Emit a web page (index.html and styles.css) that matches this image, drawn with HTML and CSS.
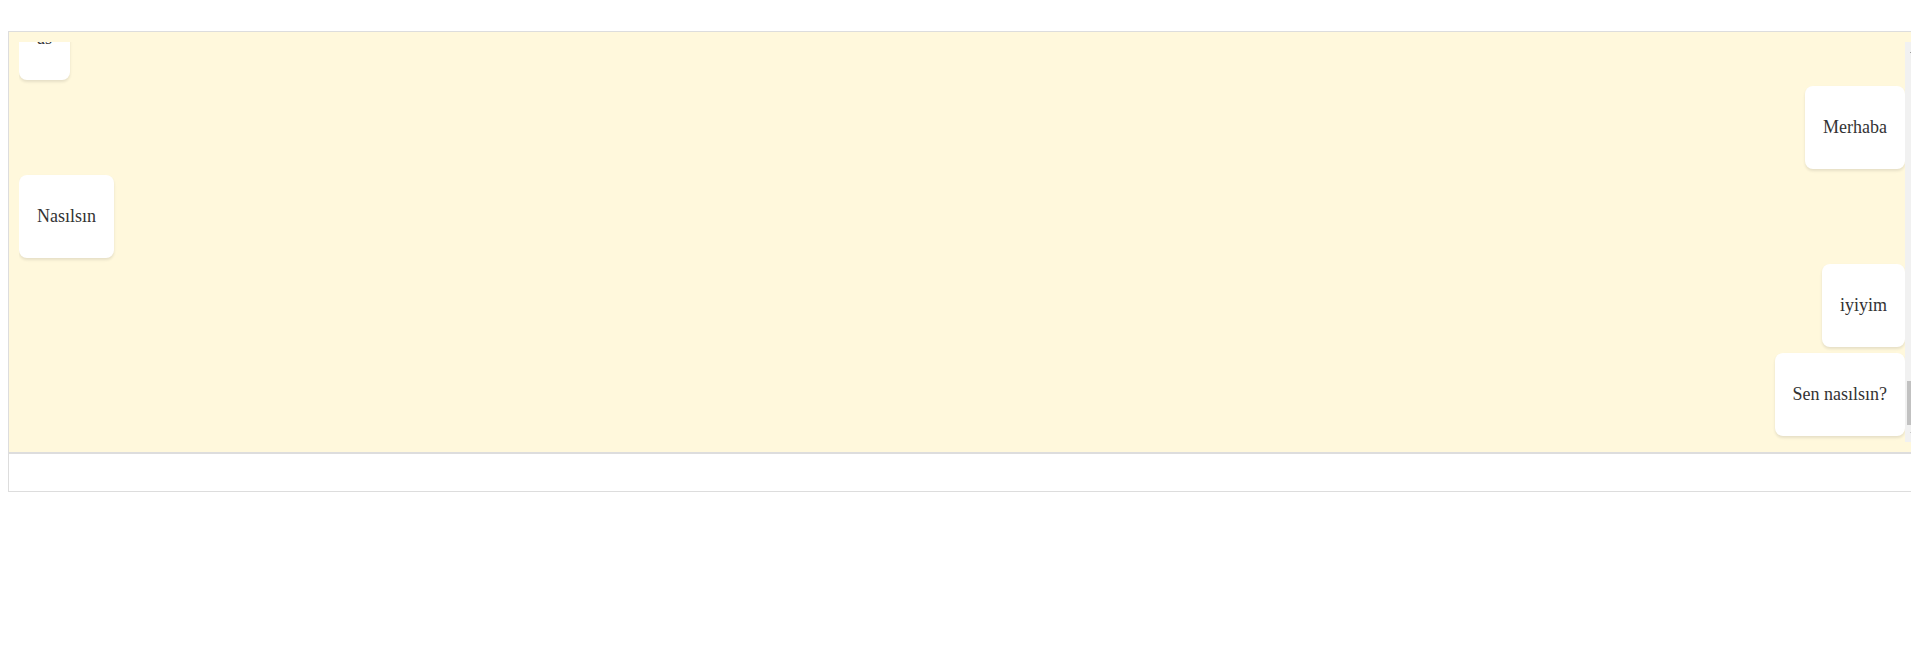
FILE: index.html
```html
<!DOCTYPE html>
<html lang="tr">
<head>
<meta charset="utf-8">
<title>Sohbet</title>
<link rel="stylesheet" href="styles.css">
</head>
<body>
<div class="chat">
  <div class="chat-viewport">
    <div class="messages">
      <div class="message-list">
        <div class="message left">as</div>
        <div class="message right">as</div>
        <div class="message left">as</div>
        <div class="message right">as</div>
        <div class="message left">as</div>
        <div class="message right">as</div>
        <div class="message left">as</div>
        <div class="message right">as</div>
        <div class="message left">as</div>
        <div class="message right">as</div>
        <div class="message left">as</div>
        <div class="message right">as</div>
        <div class="message left">as</div>
        <div class="message right">as</div>
        <div class="message left">as</div>
        <div class="message right">as</div>
        <div class="message left">as</div>
        <div class="message right">as</div>
        <div class="message left">as</div>
        <div class="message right">as</div>
        <div class="message left">as</div>
        <div class="message right">as</div>
        <div class="message left">as</div>
        <div class="message right">as</div>
        <div class="message left">as</div>
        <div class="message right">as</div>
        <div class="message left">as</div>
        <div class="message right">as</div>
        <div class="message left">as</div>
        <div class="message right">as</div>
        <div class="message left">as</div>
        <div class="message right">as</div>
        <div class="message left">as</div>
        <div class="message right">Merhaba</div>
        <div class="message left">Nasılsın</div>
        <div class="message right">iyiyim</div>
        <div class="message right">Sen nasılsın?</div>
      </div>
    </div>
    <div class="scrollbar">
      <div class="sb-button">
        <svg width="8" height="4" viewBox="0 0 8 4"><polygon points="0,4 4,0 8,4" fill="#505050"/></svg>
      </div>
      <div class="sb-track">
        <div class="sb-thumb"></div>
      </div>
      <div class="sb-button">
        <svg width="8" height="4" viewBox="0 0 8 4"><polygon points="0,0 8,0 4,4" fill="#a3a3a3"/></svg>
      </div>
    </div>
  </div>
</div>
<input class="chat-input" type="text">
</body>
</html>
```

FILE: styles.css
```css
html {
  overflow: hidden;
}

body {
  margin: 31px 8px 8px;
  font-family: "Liberation Serif", "Times New Roman", serif;
  background: #ffffff;
}

.chat {
  width: 100%;
  padding: 10px;
  border: 1px solid #dddddd;
  background: #fff8dc;
}

.chat-viewport {
  display: flex;
  height: 400px;
}

.messages {
  flex: 1;
  min-width: 0;
  overflow: hidden;
  display: flex;
  flex-direction: column-reverse;
}

.message-list {
  display: flex;
  flex-direction: column;
  gap: 6px;
  padding: 6px 0;
}

.message {
  padding: 31px 18px;
  font-size: 18px;
  line-height: normal;
  color: #333333;
  background: #ffffff;
  border-radius: 8px;
  box-shadow: 0 2px 3px rgba(0, 0, 0, 0.1);
}

.message.left {
  align-self: flex-start;
}

.message.right {
  align-self: flex-end;
}

.scrollbar {
  flex: none;
  width: 17px;
  display: flex;
  flex-direction: column;
  background: #f1f1f1;
}

.sb-button {
  flex: none;
  height: 17px;
  display: flex;
  align-items: center;
  justify-content: center;
}

.sb-button svg {
  display: block;
}

.sb-track {
  flex: 1;
  display: flex;
  flex-direction: column;
  justify-content: flex-end;
}

.sb-thumb {
  height: 44px;
  margin: 0 2px;
  background: #c1c1c1;
}

.chat-input {
  display: block;
  box-sizing: content-box;
  width: 100%;
  height: 17px;
  margin: 0;
  padding: 10px;
  border: 1px solid #dddddd;
  font-size: 16px;
  background: #ffffff;
}
```
